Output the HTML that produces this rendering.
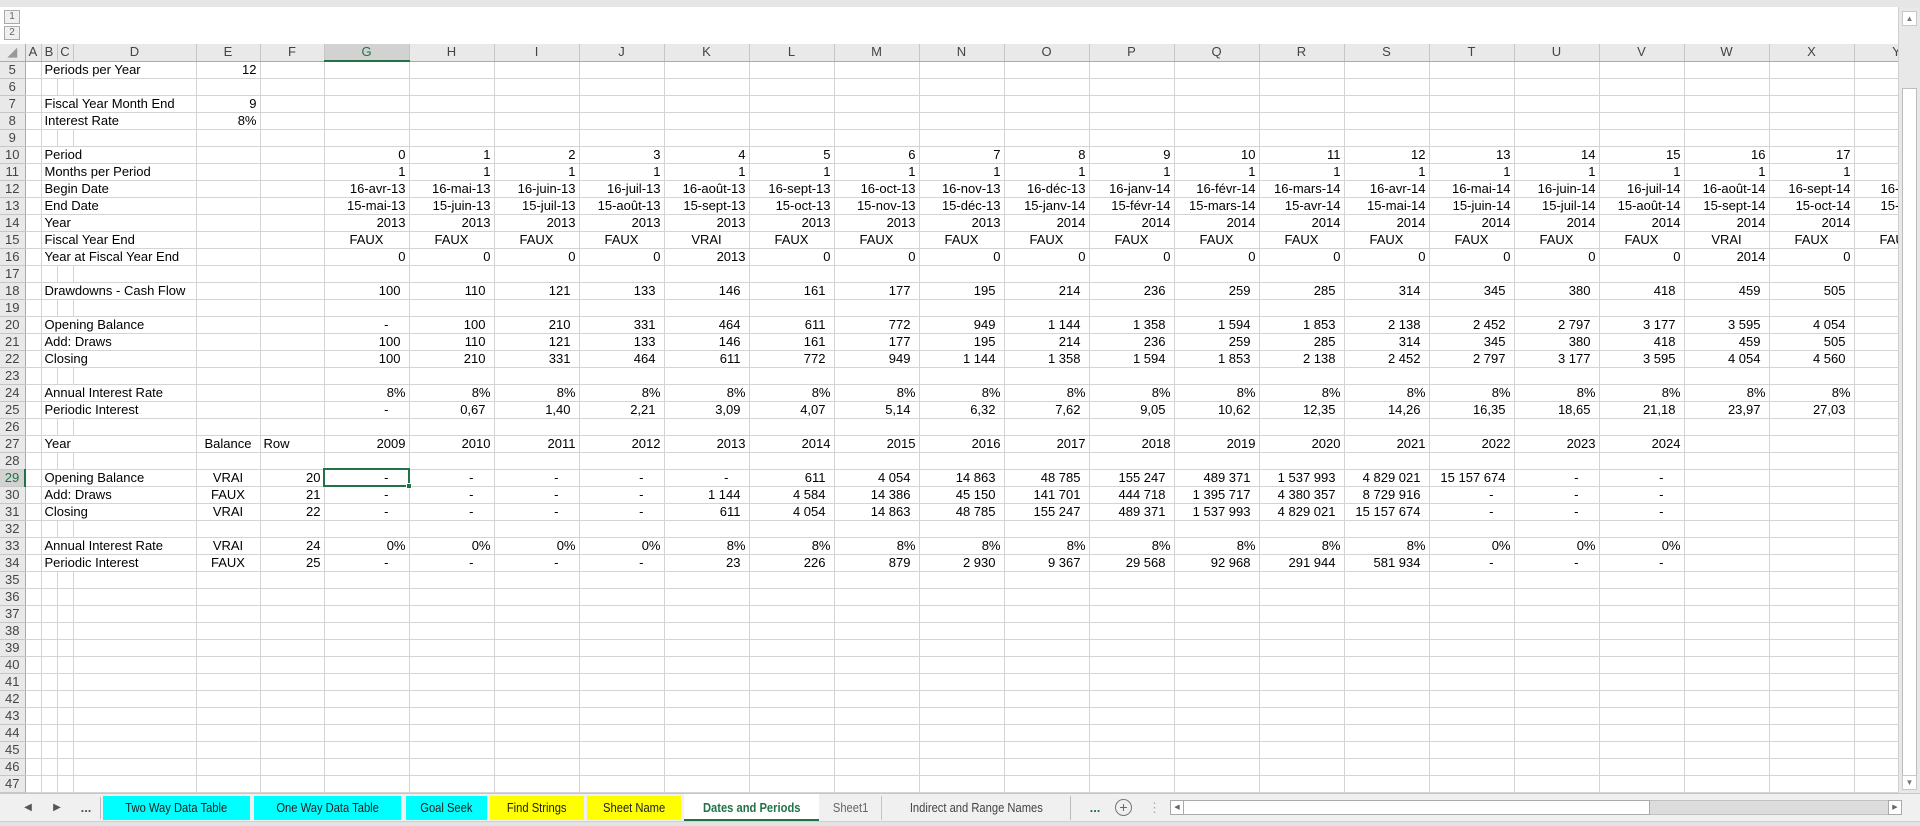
<!DOCTYPE html>
<html><head><meta charset="utf-8">
<style>
*{box-sizing:border-box;margin:0;padding:0}
body{width:1920px;height:826px;overflow:hidden;background:#fff;font-family:"Liberation Sans",Arial,sans-serif;font-size:13px;color:#000;position:relative}
#top{position:absolute;left:0;top:0;width:1920px;height:7px;background:#e6e6e6}
.ob{position:absolute;left:4px;width:16px;height:14px;border:1px solid #aaa;background:#f0f0f0;font-size:10px;color:#666;text-align:center;line-height:12px}
#grid{position:absolute;left:0;top:44px;width:1898px;height:749px;overflow:hidden}
table{border-collapse:collapse;table-layout:fixed;width:2023px}
td,th{height:17px;border-right:1px solid #d4d4d4;border-bottom:1px solid #d4d4d4;white-space:nowrap;overflow:hidden;padding:0 3px;text-align:right;line-height:16px;font-weight:normal}
th{background:#e9e9e9;color:#444;text-align:center;border-color:#c6c6c6;padding:0}
tr.h th{border-bottom:1px solid #ababab}
th.rn{border-right:1px solid #ababab}
td.l{text-align:left;padding-left:3px}
td.c{text-align:center}
td.a{padding-right:8px}
td.d{padding-right:20px}
#sel{position:absolute;left:323px;top:468px;width:87px;height:19px;border:2px solid #217346}
#hdl{position:absolute;left:406px;top:483px;width:6px;height:6px;background:#217346;border:1px solid #fff}
#vs{position:absolute;left:1898px;top:7px;width:22px;height:786px;background:#e8e8e8;border-left:1px solid #d0d0d0}
#tabs{position:absolute;left:0;top:793px;width:1920px;height:28px;background:#f0f0f0;border-top:1px solid #c6c6c6}
#status{position:absolute;left:0;top:821px;width:1920px;height:5px;background:#e3e3e3;border-top:1px solid #d0d0d0}
.tab{position:absolute;top:2px;height:24px;line-height:24px;font-size:13px;text-align:center;color:#222;white-space:nowrap;overflow:visible}
.tab span{display:inline-block;transform:scaleX(0.86)}
.cy{background:#00ffff}
.ye{background:#ffff00}
</style></head><body>
<div id="top"></div>
<div class="ob" style="top:10px">1</div>
<div class="ob" style="top:26px">2</div>
<div id="grid">
<table>
<colgroup><col style="width:25px"><col style="width:16px"><col style="width:16px"><col style="width:16px"><col style="width:123px"><col style="width:64px"><col style="width:64px">
<col style="width:85px"><col style="width:85px"><col style="width:85px"><col style="width:85px"><col style="width:85px"><col style="width:85px"><col style="width:85px"><col style="width:85px"><col style="width:85px"><col style="width:85px"><col style="width:85px"><col style="width:85px"><col style="width:85px"><col style="width:85px"><col style="width:85px"><col style="width:85px"><col style="width:85px"><col style="width:85px"><col style="width:85px"></colgroup>
<tr class="h"><th class="rn" style="color:#999">◢</th><th>A</th><th>B</th><th>C</th><th>D</th><th>E</th><th>F</th><th style="background:#d2d2d2;border-bottom:2px solid #217346;color:#217346">G</th><th>H</th><th>I</th><th>J</th><th>K</th><th>L</th><th>M</th><th>N</th><th>O</th><th>P</th><th>Q</th><th>R</th><th>S</th><th>T</th><th>U</th><th>V</th><th>W</th><th>X</th><th>Y</th></tr>
<tr><th class="rn">5</th><td></td><td class="l" colspan="3">Periods per Year</td><td>12</td><td></td><td></td><td></td><td></td><td></td><td></td><td></td><td></td><td></td><td></td><td></td><td></td><td></td><td></td><td></td><td></td><td></td><td></td><td></td><td></td></tr>
<tr><th class="rn">6</th><td></td><td></td><td></td><td></td><td></td><td></td><td></td><td></td><td></td><td></td><td></td><td></td><td></td><td></td><td></td><td></td><td></td><td></td><td></td><td></td><td></td><td></td><td></td><td></td><td></td><td></td></tr>
<tr><th class="rn">7</th><td></td><td class="l" colspan="3">Fiscal Year Month End</td><td>9</td><td></td><td></td><td></td><td></td><td></td><td></td><td></td><td></td><td></td><td></td><td></td><td></td><td></td><td></td><td></td><td></td><td></td><td></td><td></td><td></td></tr>
<tr><th class="rn">8</th><td></td><td class="l" colspan="3">Interest Rate</td><td>8%</td><td></td><td></td><td></td><td></td><td></td><td></td><td></td><td></td><td></td><td></td><td></td><td></td><td></td><td></td><td></td><td></td><td></td><td></td><td></td><td></td></tr>
<tr><th class="rn">9</th><td></td><td></td><td></td><td></td><td></td><td></td><td></td><td></td><td></td><td></td><td></td><td></td><td></td><td></td><td></td><td></td><td></td><td></td><td></td><td></td><td></td><td></td><td></td><td></td><td></td><td></td></tr>
<tr><th class="rn">10</th><td></td><td class="l" colspan="3">Period</td><td></td><td></td><td>0</td><td>1</td><td>2</td><td>3</td><td>4</td><td>5</td><td>6</td><td>7</td><td>8</td><td>9</td><td>10</td><td>11</td><td>12</td><td>13</td><td>14</td><td>15</td><td>16</td><td>17</td><td></td></tr>
<tr><th class="rn">11</th><td></td><td class="l" colspan="3">Months per Period</td><td></td><td></td><td>1</td><td>1</td><td>1</td><td>1</td><td>1</td><td>1</td><td>1</td><td>1</td><td>1</td><td>1</td><td>1</td><td>1</td><td>1</td><td>1</td><td>1</td><td>1</td><td>1</td><td>1</td><td></td></tr>
<tr><th class="rn">12</th><td></td><td class="l" colspan="3">Begin Date</td><td></td><td></td><td>16-avr-13</td><td>16-mai-13</td><td>16-juin-13</td><td>16-juil-13</td><td>16-août-13</td><td>16-sept-13</td><td>16-oct-13</td><td>16-nov-13</td><td>16-déc-13</td><td>16-janv-14</td><td>16-févr-14</td><td>16-mars-14</td><td>16-avr-14</td><td>16-mai-14</td><td>16-juin-14</td><td>16-juil-14</td><td>16-août-14</td><td>16-sept-14</td><td class="l" style="padding-left:26px">16-oct-14</td></tr>
<tr><th class="rn">13</th><td></td><td class="l" colspan="3">End Date</td><td></td><td></td><td>15-mai-13</td><td>15-juin-13</td><td>15-juil-13</td><td>15-août-13</td><td>15-sept-13</td><td>15-oct-13</td><td>15-nov-13</td><td>15-déc-13</td><td>15-janv-14</td><td>15-févr-14</td><td>15-mars-14</td><td>15-avr-14</td><td>15-mai-14</td><td>15-juin-14</td><td>15-juil-14</td><td>15-août-14</td><td>15-sept-14</td><td>15-oct-14</td><td class="l" style="padding-left:26px">15-nov-14</td></tr>
<tr><th class="rn">14</th><td></td><td class="l" colspan="3">Year</td><td></td><td></td><td>2013</td><td>2013</td><td>2013</td><td>2013</td><td>2013</td><td>2013</td><td>2013</td><td>2013</td><td>2014</td><td>2014</td><td>2014</td><td>2014</td><td>2014</td><td>2014</td><td>2014</td><td>2014</td><td>2014</td><td>2014</td><td></td></tr>
<tr><th class="rn">15</th><td></td><td class="l" colspan="3">Fiscal Year End</td><td></td><td></td><td class="c">FAUX</td><td class="c">FAUX</td><td class="c">FAUX</td><td class="c">FAUX</td><td class="c">VRAI</td><td class="c">FAUX</td><td class="c">FAUX</td><td class="c">FAUX</td><td class="c">FAUX</td><td class="c">FAUX</td><td class="c">FAUX</td><td class="c">FAUX</td><td class="c">FAUX</td><td class="c">FAUX</td><td class="c">FAUX</td><td class="c">FAUX</td><td class="c">VRAI</td><td class="c">FAUX</td><td class="c">FAUX</td></tr>
<tr><th class="rn">16</th><td></td><td class="l" colspan="3">Year at Fiscal Year End</td><td></td><td></td><td>0</td><td>0</td><td>0</td><td>0</td><td>2013</td><td>0</td><td>0</td><td>0</td><td>0</td><td>0</td><td>0</td><td>0</td><td>0</td><td>0</td><td>0</td><td>0</td><td>2014</td><td>0</td><td></td></tr>
<tr><th class="rn">17</th><td></td><td></td><td></td><td></td><td></td><td></td><td></td><td></td><td></td><td></td><td></td><td></td><td></td><td></td><td></td><td></td><td></td><td></td><td></td><td></td><td></td><td></td><td></td><td></td><td></td><td></td></tr>
<tr><th class="rn">18</th><td></td><td class="l" colspan="3">Drawdowns - Cash Flow</td><td></td><td></td><td class="a">100</td><td class="a">110</td><td class="a">121</td><td class="a">133</td><td class="a">146</td><td class="a">161</td><td class="a">177</td><td class="a">195</td><td class="a">214</td><td class="a">236</td><td class="a">259</td><td class="a">285</td><td class="a">314</td><td class="a">345</td><td class="a">380</td><td class="a">418</td><td class="a">459</td><td class="a">505</td><td></td></tr>
<tr><th class="rn">19</th><td></td><td></td><td></td><td></td><td></td><td></td><td></td><td></td><td></td><td></td><td></td><td></td><td></td><td></td><td></td><td></td><td></td><td></td><td></td><td></td><td></td><td></td><td></td><td></td><td></td><td></td></tr>
<tr><th class="rn">20</th><td></td><td class="l" colspan="3">Opening Balance</td><td></td><td></td><td class="d">-</td><td class="a">100</td><td class="a">210</td><td class="a">331</td><td class="a">464</td><td class="a">611</td><td class="a">772</td><td class="a">949</td><td class="a">1 144</td><td class="a">1 358</td><td class="a">1 594</td><td class="a">1 853</td><td class="a">2 138</td><td class="a">2 452</td><td class="a">2 797</td><td class="a">3 177</td><td class="a">3 595</td><td class="a">4 054</td><td></td></tr>
<tr><th class="rn">21</th><td></td><td class="l" colspan="3">Add: Draws</td><td></td><td></td><td class="a">100</td><td class="a">110</td><td class="a">121</td><td class="a">133</td><td class="a">146</td><td class="a">161</td><td class="a">177</td><td class="a">195</td><td class="a">214</td><td class="a">236</td><td class="a">259</td><td class="a">285</td><td class="a">314</td><td class="a">345</td><td class="a">380</td><td class="a">418</td><td class="a">459</td><td class="a">505</td><td></td></tr>
<tr><th class="rn">22</th><td></td><td class="l" colspan="3">Closing</td><td></td><td></td><td class="a">100</td><td class="a">210</td><td class="a">331</td><td class="a">464</td><td class="a">611</td><td class="a">772</td><td class="a">949</td><td class="a">1 144</td><td class="a">1 358</td><td class="a">1 594</td><td class="a">1 853</td><td class="a">2 138</td><td class="a">2 452</td><td class="a">2 797</td><td class="a">3 177</td><td class="a">3 595</td><td class="a">4 054</td><td class="a">4 560</td><td></td></tr>
<tr><th class="rn">23</th><td></td><td></td><td></td><td></td><td></td><td></td><td></td><td></td><td></td><td></td><td></td><td></td><td></td><td></td><td></td><td></td><td></td><td></td><td></td><td></td><td></td><td></td><td></td><td></td><td></td><td></td></tr>
<tr><th class="rn">24</th><td></td><td class="l" colspan="3">Annual Interest Rate</td><td></td><td></td><td>8%</td><td>8%</td><td>8%</td><td>8%</td><td>8%</td><td>8%</td><td>8%</td><td>8%</td><td>8%</td><td>8%</td><td>8%</td><td>8%</td><td>8%</td><td>8%</td><td>8%</td><td>8%</td><td>8%</td><td>8%</td><td></td></tr>
<tr><th class="rn">25</th><td></td><td class="l" colspan="3">Periodic Interest</td><td></td><td></td><td class="d">-</td><td class="a">0,67</td><td class="a">1,40</td><td class="a">2,21</td><td class="a">3,09</td><td class="a">4,07</td><td class="a">5,14</td><td class="a">6,32</td><td class="a">7,62</td><td class="a">9,05</td><td class="a">10,62</td><td class="a">12,35</td><td class="a">14,26</td><td class="a">16,35</td><td class="a">18,65</td><td class="a">21,18</td><td class="a">23,97</td><td class="a">27,03</td><td></td></tr>
<tr><th class="rn">26</th><td></td><td></td><td></td><td></td><td></td><td></td><td></td><td></td><td></td><td></td><td></td><td></td><td></td><td></td><td></td><td></td><td></td><td></td><td></td><td></td><td></td><td></td><td></td><td></td><td></td><td></td></tr>
<tr><th class="rn">27</th><td></td><td class="l" colspan="3">Year</td><td class="c">Balance</td><td class="l">Row</td><td>2009</td><td>2010</td><td>2011</td><td>2012</td><td>2013</td><td>2014</td><td>2015</td><td>2016</td><td>2017</td><td>2018</td><td>2019</td><td>2020</td><td>2021</td><td>2022</td><td>2023</td><td>2024</td><td></td><td></td><td></td></tr>
<tr><th class="rn">28</th><td></td><td></td><td></td><td></td><td></td><td></td><td></td><td></td><td></td><td></td><td></td><td></td><td></td><td></td><td></td><td></td><td></td><td></td><td></td><td></td><td></td><td></td><td></td><td></td><td></td><td></td></tr>
<tr><th class="rn" style="background:#d2d2d2;color:#217346;border-right:2px solid #217346">29</th><td></td><td class="l" colspan="3">Opening Balance</td><td class="c">VRAI</td><td>20</td><td class="d">-</td><td class="d">-</td><td class="d">-</td><td class="d">-</td><td class="d">-</td><td class="a">611</td><td class="a">4 054</td><td class="a">14 863</td><td class="a">48 785</td><td class="a">155 247</td><td class="a">489 371</td><td class="a">1 537 993</td><td class="a">4 829 021</td><td class="a">15 157 674</td><td class="d">-</td><td class="d">-</td><td></td><td></td><td></td></tr>
<tr><th class="rn">30</th><td></td><td class="l" colspan="3">Add: Draws</td><td class="c">FAUX</td><td>21</td><td class="d">-</td><td class="d">-</td><td class="d">-</td><td class="d">-</td><td class="a">1 144</td><td class="a">4 584</td><td class="a">14 386</td><td class="a">45 150</td><td class="a">141 701</td><td class="a">444 718</td><td class="a">1 395 717</td><td class="a">4 380 357</td><td class="a">8 729 916</td><td class="d">-</td><td class="d">-</td><td class="d">-</td><td></td><td></td><td></td></tr>
<tr><th class="rn">31</th><td></td><td class="l" colspan="3">Closing</td><td class="c">VRAI</td><td>22</td><td class="d">-</td><td class="d">-</td><td class="d">-</td><td class="d">-</td><td class="a">611</td><td class="a">4 054</td><td class="a">14 863</td><td class="a">48 785</td><td class="a">155 247</td><td class="a">489 371</td><td class="a">1 537 993</td><td class="a">4 829 021</td><td class="a">15 157 674</td><td class="d">-</td><td class="d">-</td><td class="d">-</td><td></td><td></td><td></td></tr>
<tr><th class="rn">32</th><td></td><td></td><td></td><td></td><td></td><td></td><td></td><td></td><td></td><td></td><td></td><td></td><td></td><td></td><td></td><td></td><td></td><td></td><td></td><td></td><td></td><td></td><td></td><td></td><td></td><td></td></tr>
<tr><th class="rn">33</th><td></td><td class="l" colspan="3">Annual Interest Rate</td><td class="c">VRAI</td><td>24</td><td>0%</td><td>0%</td><td>0%</td><td>0%</td><td>8%</td><td>8%</td><td>8%</td><td>8%</td><td>8%</td><td>8%</td><td>8%</td><td>8%</td><td>8%</td><td>0%</td><td>0%</td><td>0%</td><td></td><td></td><td></td></tr>
<tr><th class="rn">34</th><td></td><td class="l" colspan="3">Periodic Interest</td><td class="c">FAUX</td><td>25</td><td class="d">-</td><td class="d">-</td><td class="d">-</td><td class="d">-</td><td class="a">23</td><td class="a">226</td><td class="a">879</td><td class="a">2 930</td><td class="a">9 367</td><td class="a">29 568</td><td class="a">92 968</td><td class="a">291 944</td><td class="a">581 934</td><td class="d">-</td><td class="d">-</td><td class="d">-</td><td></td><td></td><td></td></tr>
<tr><th class="rn">35</th><td></td><td></td><td></td><td></td><td></td><td></td><td></td><td></td><td></td><td></td><td></td><td></td><td></td><td></td><td></td><td></td><td></td><td></td><td></td><td></td><td></td><td></td><td></td><td></td><td></td><td></td></tr>
<tr><th class="rn">36</th><td></td><td></td><td></td><td></td><td></td><td></td><td></td><td></td><td></td><td></td><td></td><td></td><td></td><td></td><td></td><td></td><td></td><td></td><td></td><td></td><td></td><td></td><td></td><td></td><td></td><td></td></tr>
<tr><th class="rn">37</th><td></td><td></td><td></td><td></td><td></td><td></td><td></td><td></td><td></td><td></td><td></td><td></td><td></td><td></td><td></td><td></td><td></td><td></td><td></td><td></td><td></td><td></td><td></td><td></td><td></td><td></td></tr>
<tr><th class="rn">38</th><td></td><td></td><td></td><td></td><td></td><td></td><td></td><td></td><td></td><td></td><td></td><td></td><td></td><td></td><td></td><td></td><td></td><td></td><td></td><td></td><td></td><td></td><td></td><td></td><td></td><td></td></tr>
<tr><th class="rn">39</th><td></td><td></td><td></td><td></td><td></td><td></td><td></td><td></td><td></td><td></td><td></td><td></td><td></td><td></td><td></td><td></td><td></td><td></td><td></td><td></td><td></td><td></td><td></td><td></td><td></td><td></td></tr>
<tr><th class="rn">40</th><td></td><td></td><td></td><td></td><td></td><td></td><td></td><td></td><td></td><td></td><td></td><td></td><td></td><td></td><td></td><td></td><td></td><td></td><td></td><td></td><td></td><td></td><td></td><td></td><td></td><td></td></tr>
<tr><th class="rn">41</th><td></td><td></td><td></td><td></td><td></td><td></td><td></td><td></td><td></td><td></td><td></td><td></td><td></td><td></td><td></td><td></td><td></td><td></td><td></td><td></td><td></td><td></td><td></td><td></td><td></td><td></td></tr>
<tr><th class="rn">42</th><td></td><td></td><td></td><td></td><td></td><td></td><td></td><td></td><td></td><td></td><td></td><td></td><td></td><td></td><td></td><td></td><td></td><td></td><td></td><td></td><td></td><td></td><td></td><td></td><td></td><td></td></tr>
<tr><th class="rn">43</th><td></td><td></td><td></td><td></td><td></td><td></td><td></td><td></td><td></td><td></td><td></td><td></td><td></td><td></td><td></td><td></td><td></td><td></td><td></td><td></td><td></td><td></td><td></td><td></td><td></td><td></td></tr>
<tr><th class="rn">44</th><td></td><td></td><td></td><td></td><td></td><td></td><td></td><td></td><td></td><td></td><td></td><td></td><td></td><td></td><td></td><td></td><td></td><td></td><td></td><td></td><td></td><td></td><td></td><td></td><td></td><td></td></tr>
<tr><th class="rn">45</th><td></td><td></td><td></td><td></td><td></td><td></td><td></td><td></td><td></td><td></td><td></td><td></td><td></td><td></td><td></td><td></td><td></td><td></td><td></td><td></td><td></td><td></td><td></td><td></td><td></td><td></td></tr>
<tr><th class="rn">46</th><td></td><td></td><td></td><td></td><td></td><td></td><td></td><td></td><td></td><td></td><td></td><td></td><td></td><td></td><td></td><td></td><td></td><td></td><td></td><td></td><td></td><td></td><td></td><td></td><td></td><td></td></tr>
<tr><th class="rn">47</th><td></td><td></td><td></td><td></td><td></td><td></td><td></td><td></td><td></td><td></td><td></td><td></td><td></td><td></td><td></td><td></td><td></td><td></td><td></td><td></td><td></td><td></td><td></td><td></td><td></td><td></td></tr>
</table>
</div>
<div id="sel"></div><div id="hdl"></div>
<div id="vs">
 <div style="position:absolute;left:3px;top:4px;width:15px;height:15px;background:#fff;border:1px solid #c8c8c8;font-size:8px;color:#777;text-align:center;line-height:13px">▲</div>
 <div style="position:absolute;left:3px;top:81px;width:15px;height:690px;background:#fff;border:1px solid #bdbdbd"></div>
 <div style="position:absolute;left:3px;top:768px;width:15px;height:15px;background:#fff;border:1px solid #c8c8c8;font-size:8px;color:#777;text-align:center;line-height:13px">▼</div>
</div>
<div id="tabs">
 <div class="tab" style="left:22px;width:12px;color:#555;font-size:10px">◀</div>
 <div class="tab" style="left:51px;width:12px;color:#555;font-size:10px">▶</div>
 <div class="tab" style="left:78px;width:16px;color:#555;font-weight:bold">...</div>
 <div style="position:absolute;left:100px;top:3px;width:1px;height:22px;background:#bbb"></div>
 <div class="tab cy" style="left:103px;width:147px"><span>Two Way Data Table</span></div>
 <div class="tab cy" style="left:254px;width:147px"><span>One Way Data Table</span></div>
 <div class="tab cy" style="left:406px;width:81px"><span>Goal Seek</span></div>
 <div class="tab ye" style="left:490px;width:94px"><span>Find Strings</span></div>
 <div class="tab ye" style="left:587px;width:94px"><span>Sheet Name</span></div>
 <div class="tab" style="left:684px;width:135px;top:0;height:27px;background:#fff;color:#217346;font-weight:bold;border-bottom:2px solid #217346;line-height:27px"><span>Dates and Periods</span></div>
 <div class="tab" style="left:820px;width:62px;color:#666;border-right:1px solid #c4c4c4"><span>Sheet1</span></div>
 <div class="tab" style="left:882px;width:189px;color:#444;border-right:1px solid #bbb"><span>Indirect and Range Names</span></div>
 <div class="tab" style="left:1085px;width:20px;color:#217346;font-weight:bold">...</div>
 <div style="position:absolute;left:1115px;top:5px;width:17px;height:17px;border:1px solid #777;border-radius:50%;color:#666;font-size:14px;line-height:14px;text-align:center">+</div>
 <div class="tab" style="left:1148px;width:10px;color:#aaa">⋮</div>
 <div style="position:absolute;left:1170px;top:6px;width:732px;height:15px;background:#dcdcdc;border:1px solid #c0c0c0"></div>
 <div style="position:absolute;left:1170px;top:6px;width:480px;height:15px;background:#fff;border:1px solid #aaa"></div>
 <div style="position:absolute;left:1170px;top:6px;width:14px;height:15px;background:#fff;border:1px solid #aaa;font-size:7px;color:#666;text-align:center;line-height:13px">◀</div>
 <div style="position:absolute;left:1888px;top:6px;width:14px;height:15px;background:#fff;border:1px solid #aaa;font-size:7px;color:#666;text-align:center;line-height:13px">▶</div>
</div>
<div id="status"></div>
</body></html>
